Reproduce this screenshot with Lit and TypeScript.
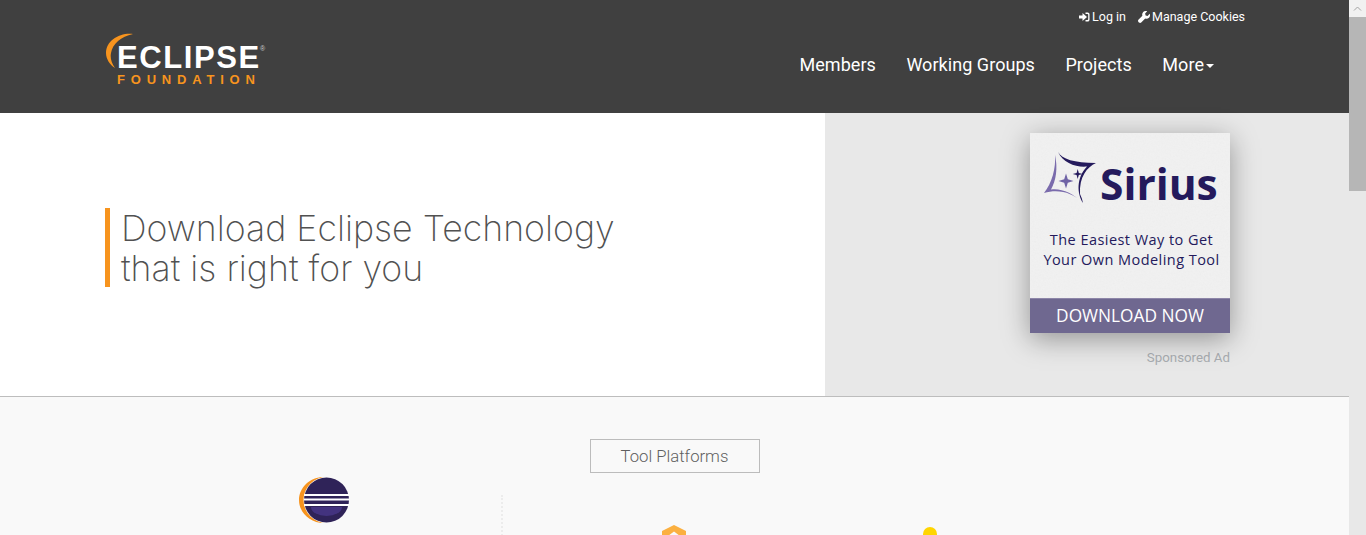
import { LitElement, html, css, svg } from 'lit'
import { customElement } from 'lit/decorators.js'

const crescent = svg`<path d="M28 1C14-.5 1 8 1 20c0 6 4 12 9 15C6.500 30 5 25 6 20 7.500 11 16 3.500 28 1Z" fill="#f7941e"/>`

const NAV = ['Members', 'Working Groups', 'Projects']

@customElement('app-root')
export class AppRoot extends LitElement {
  static styles = css`
    :host {
      display: flex;
      width: 1366px;
      height: 535px;
      overflow: hidden;
      font-family: 'Inter', 'Liberation Sans', sans-serif;
      color: #4a4a4a;
      background: #f9f9f9;
    }
    a {
      color: inherit;
      text-decoration: none;
    }

    .page {
      width: 1349px;
      flex: none;
      display: flex;
      flex-direction: column;
    }

    /* header */
    .header {
      height: 113px;
      flex: none;
      box-sizing: border-box;
      background: #404040;
      color: #fff;
      display: flex;
      justify-content: space-between;
      padding: 0 104px 0 105px;
    }
    .logo {
      margin-top: 33px;
      width: 162px;
      height: 54px;
      position: relative;
    }
    .logo svg {
      position: absolute;
      left: 0;
      top: 0;
    }
    .logo-word {
      position: absolute;
      left: 12px;
      top: 9px;
      font: 700 31px/32px 'Liberation Sans', sans-serif;
      letter-spacing: 1.6px;
      color: #fff;
    }
    .logo-reg {
      position: absolute;
      left: 155px;
      top: 12px;
      font: 400 7px/7px 'Liberation Sans', sans-serif;
      color: #ccc;
    }
    .logo-sub {
      position: absolute;
      left: 12px;
      top: 41px;
      font: 700 13px/12px 'Liberation Sans', sans-serif;
      letter-spacing: 5.8px;
      color: #f7941e;
    }
    .right {
      display: flex;
      flex-direction: column;
      align-items: flex-end;
    }
    .util {
      margin-top: 9px;
      display: flex;
      gap: 12px;
      font: 400 12.5px/16px 'Roboto', sans-serif;
    }
    .util a {
      display: flex;
      align-items: center;
      gap: 2px;
    }
    .nav {
      margin-top: 27.5px;
      margin-right: 31px;
      display: flex;
      gap: 30.5px;
      font: 400 18px/24px 'Roboto', sans-serif;
      letter-spacing: 0.05px;
    }
    .nav a {
      display: flex;
      align-items: center;
    }
    .caret {
      width: 0;
      height: 0;
      margin-left: 2px;
      margin-top: 2px;
      border-left: 4px solid transparent;
      border-right: 4px solid transparent;
      border-top: 4px solid #fff;
    }

    /* hero */
    .hero {
      height: 284px;
      flex: none;
      display: flex;
      box-sizing: border-box;
      border-bottom: 1px solid #bdbdbd;
      background: #fff;
    }
    .hero-main {
      width: 825px;
      flex: none;
      box-sizing: border-box;
      padding: 95px 0 0 105px;
    }
    .hero-main h1 {
      margin: 0;
      width: 560px;
      height: 79px;
      box-sizing: border-box;
      border-left: 5px solid #f7941e;
      padding-left: 11px;
      font: 200 35.7px/40px 'Inter', sans-serif;
      color: #515151;
    }
    .hero-side {
      flex: 1;
      background: #e8e8e8;
      box-sizing: border-box;
      padding: 20px 119px 0 0;
      display: flex;
      flex-direction: column;
      align-items: flex-end;
    }
    .ad {
      position: relative;
      width: 200px;
      height: 200px;
      background: #f1f1f1;
      box-shadow: 0 6px 26px rgba(0, 0, 0, 0.36);
      display: flex;
      flex-direction: column;
      color: #241a5c;
    }
    .ad-noise {
      position: absolute;
      left: 0;
      top: 0;
      opacity: 0.05;
    }
    .ad-logo {
      position: relative;
      margin: 17px 0 0 13px;
      display: flex;
      align-items: center;
      gap: 3px;
      height: 54px;
      font: 700 42.5px/54px 'Open Sans', sans-serif;
      color: #241a5c;
    }
    .ad-logo span {
      margin-top: 14px;
    }
    .ad-copy {
      position: relative;
      margin-top: 26px;
      padding-left: 3px;
      text-align: center;
      font: 500 14.5px/20px 'Open Sans', sans-serif;
      letter-spacing: 0.45px;
    }
    .ad-btn {
      position: relative;
      margin-top: auto;
      height: 35px;
      border-top: 1px solid #8d86a8;
      box-sizing: border-box;
      background: #6f6890;
      color: #fff;
      text-align: center;
      font: 400 17.3px/34px 'Open Sans', sans-serif;
    }
    .sponsor {
      margin-top: 16px;
      font: 400 13.3px/18px 'Roboto', sans-serif;
      color: #a9adb1;
    }

    /* platforms */
    .platforms {
      flex: 1;
      position: relative;
      background: #f9f9f9;
      display: flex;
      flex-direction: column;
      align-items: center;
      padding-top: 42px;
      overflow: hidden;
    }
    .tab {
      width: 170px;
      height: 34px;
      box-sizing: border-box;
      border: 1px solid #bcbcbc;
      text-align: center;
      font: 300 16.7px/33px 'Roboto', sans-serif;
      color: #5f5f5f;
    }
    .cols {
      margin-top: 4px;
      width: 100%;
      display: flex;
    }
    .col-left {
      width: 501px;
      flex: none;
      box-sizing: border-box;
      padding-left: 299px;
    }
    .col-right {
      flex: 1;
      box-sizing: border-box;
      border-left: 2px dotted #ececec;
      margin-top: 18px;
      height: 60px;
      position: relative;
    }
    .pin-a {
      position: absolute;
      left: 159px;
      top: 30px;
    }
    .pin-b {
      position: absolute;
      left: 420px;
      top: 32px;
      width: 14px;
      height: 14px;
      border-radius: 50%;
      background: #ffd500;
    }

    /* scrollbar */
    .scrollbar {
      width: 17px;
      flex: none;
      background: #e8e8e8;
      display: flex;
      flex-direction: column;
    }
    .scroll-up {
      height: 17px;
      background: #f1f1f1;
      display: flex;
      align-items: center;
      justify-content: center;
    }
    .scroll-thumb {
      height: 174px;
      background: #b6b6b6;
    }
  `

  render() {
    return html`
      <div class="page">
        <header class="header">
          <a class="logo" href="#">
            <svg width="30" height="38" viewBox="0 0 30 38">${crescent}</svg>
            <span class="logo-word">ECLIPSE</span>
            <span class="logo-reg">®</span>
            <span class="logo-sub">FOUNDATION</span>
          </a>
          <div class="right">
            <div class="util">
              <a href="#">
                <svg width="11" height="10" viewBox="0 0 11 10">
                  <path d="M0 3.500h3.500V1L8 5 3.500 9V6.500H0Z" fill="#fff" />
                  <path d="M6.500.5h2.200c1 0 1.800.8 1.800 1.800v5.400c0 1-.8 1.800-1.800 1.800H6.500V8h2c.4 0 .7-.3.7-.7V2.700c0-.4-.3-.7-.7-.7h-2Z" fill="#fff" />
                </svg>
                Log in
              </a>
              <a href="#">
                <svg width="12" height="12" viewBox="0 0 12 12">
                  <path d="M11.700 2.800 9.600 4.900 7.600 4.400 7.100 2.400 9.200.3C7.800-.3 6.200 0 5.200 1 4.200 2 3.900 3.500 4.400 4.800L.4 8.800c-.5.5-.5 1.500 0 2.200l.6.6c.7.5 1.600.5 2.200 0l4-4c1.300.5 2.800.2 3.800-.8s1.300-2.600.7-4Z" fill="#fff" />
                </svg>
                Manage Cookies
              </a>
            </div>
            <nav class="nav">
              ${NAV.map((item) => html`<a href="#">${item}</a>`)}
              <a href="#">More<span class="caret"></span></a>
            </nav>
          </div>
        </header>

        <section class="hero">
          <div class="hero-main">
            <h1>Download Eclipse Technology<br />that is right for you</h1>
          </div>
          <div class="hero-side">
            <div class="ad">
              <svg class="ad-noise" width="200" height="165">
                <filter id="paper">
                  <feTurbulence type="fractalNoise" baseFrequency="0.6" numOctaves="2" seed="3" />
                  <feColorMatrix type="saturate" values="0" />
                </filter>
                <rect width="200" height="165" filter="url(#paper)" />
              </svg>
              <div class="ad-logo">
                <svg width="54" height="54" viewBox="0 0 54 54">
                  <path d="M15 2C19 9 31 13 53 13 44 17 36 27 37 44 38.500 47 39.500 50 40 53 34 44 33 28 44 16.500 33 17.500 20 13 15 2Z" fill="#241a5c" />
                  <path d="M12 5C13 18 9 33 1 43 15 39 29 42 40 53 30 43 18 38 8 39.500 13 31 15 18 12 5Z" fill="#7a6bac" />
                  <path d="M23 23.500 24.800 29.200 30.500 31 24.800 32.800 23 38.500 21.200 32.800 15.500 31 21.200 29.200Z" fill="#6f63a5" />
                  <path d="M34.700 19 35.800 22.900 39.700 24 35.800 25.100 34.700 29 33.600 25.100 29.700 24 33.600 22.900Z" fill="#241a5c" />
                </svg>
                <span>Sirius</span>
              </div>
              <div class="ad-copy">The Easiest Way to Get<br />Your Own Modeling Tool</div>
              <div class="ad-btn">DOWNLOAD NOW</div>
            </div>
            <div class="sponsor">Sponsored Ad</div>
          </div>
        </section>

        <section class="platforms">
          <div class="tab">Tool Platforms</div>
          <div class="cols">
            <div class="col-left">
              <svg width="50" height="47" viewBox="0 0 50 47">
                <path d="M25 0C11 0 0 10.500 0 23S11 46 25 46C15 44 5 35 5 23S15 2 25 0Z" fill="#f7941e" />
                <circle cx="27.500" cy="23" r="23" fill="#f9f9f9" />
                <circle cx="27.500" cy="23" r="22.500" fill="#2f2358" />
                <path d="M12 30a15.500 9 0 0 0 31 0Z" fill="#43337f" />
                <rect x="5" y="17" width="45" height="2" fill="#fff" />
                <rect x="5" y="21.500" width="45" height="2" fill="#fff" />
                <rect x="5" y="27" width="45" height="2" fill="#fff" />
              </svg>
            </div>
            <div class="col-right">
              <svg class="pin-a" width="24" height="11" viewBox="0 0 24 11">
                <path d="M12 0 24 6v5H0V6Z" fill="#fbb040" />
                <path d="M12 6.500 6 11h12Z" fill="#f9f9f9" />
              </svg>
              <div class="pin-b"></div>
            </div>
          </div>
        </section>
      </div>

      <aside class="scrollbar">
        <div class="scroll-up">
          <svg width="9" height="6" viewBox="0 0 9 6">
            <path d="M1 4.500 4.500 1 8 4.500" fill="none" stroke="#a3a3a3" stroke-width="1" />
          </svg>
        </div>
        <div class="scroll-thumb"></div>
      </aside>
    `
  }
}
